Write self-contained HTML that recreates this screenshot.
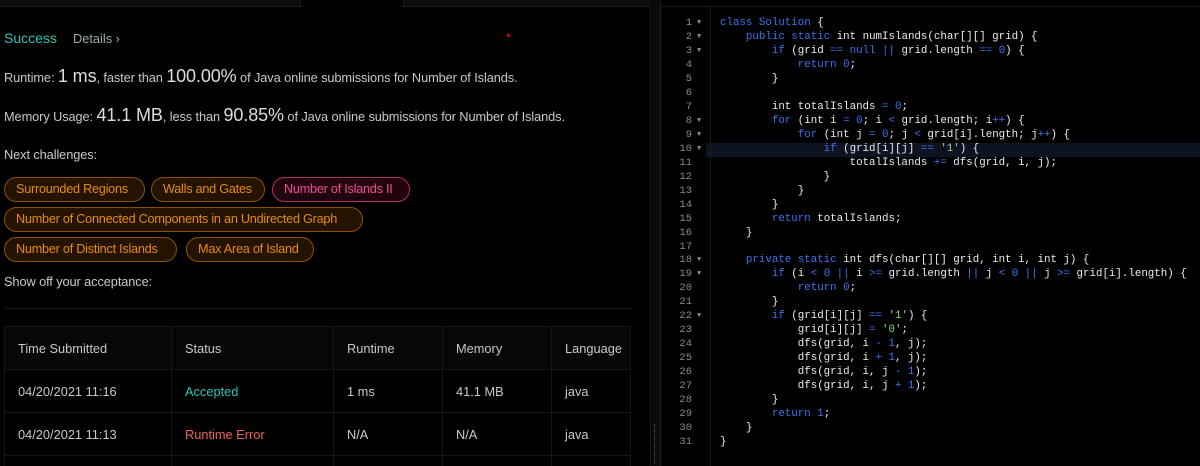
<!DOCTYPE html>
<html><head><meta charset="utf-8"><style>
*{margin:0;padding:0;box-sizing:border-box}
html{width:1200px;height:466px;overflow:hidden;background:#000}
body{width:1200px;height:466px;background:#000;overflow:hidden;position:relative;font-family:"Liberation Sans",sans-serif;color:#c4c4c4}
.abs{position:absolute;white-space:nowrap}
.top1{left:0;top:0;width:301px;height:7px;background:#0b0b0b;border-bottom:1px solid #1c1c1c;border-right:1px solid #1c1c1c}
.top2{left:403px;top:0;width:248px;height:7px;background:#0b0b0b;border-bottom:1px solid #1c1c1c;border-left:1px solid #1c1c1c}
.lp{left:0;top:7px;width:651px;height:459px;border-right:1px solid #1c1c1c}
.div{left:652px;top:0;width:8px;height:466px;background:#0a0a0a}
.ed{left:660px;top:0;width:540px;height:466px;border-left:1px solid #202020;background:#000}
.edtop{left:660px;top:0;width:540px;height:7px;border-bottom:1px solid #1c1c1c}
.gut{left:710px;top:7px;width:1px;height:459px;background:#1a1a1a}
.tag{position:absolute;height:25px;border:1px solid #8a5200;background:#231300;color:#e88a0c;border-radius:13px;font-size:12.7px;letter-spacing:-0.25px;line-height:23px;padding:0 0 0 11px;white-space:nowrap;overflow:hidden}
.pink{border-color:#b0306a;background:#22040f;color:#ee4f93}
.t{font-size:12.8px;color:#c8c8c8;letter-spacing:-0.1px}
.big{font-size:18px;color:#ddd}
table{position:absolute;left:4px;top:326px;width:627px;border-collapse:collapse;font-size:12.8px;color:#c8c8c8;table-layout:fixed}
td{border:1px solid #161616;height:43px;padding-left:13px}
tr.h td{background:#070707}
tr.last td{height:10px;border-bottom:none}
.code{left:660px;top:17px;font-family:"Liberation Mono","DejaVu Sans Mono",monospace;font-size:10.8px;line-height:13.97px;color:#ececec}
.ln{position:absolute;left:0;width:32px;text-align:right;color:#8a8a8a;font-size:10.5px}
.ar{position:absolute;left:37px;color:#888;font-size:7px}
.tx{position:absolute;left:60px;white-space:pre}
.k{color:#3c74f0}.s{color:#8fd68f}.o{color:#3c74f0}
.hl{left:706px;top:143px;width:494px;height:14px;background:#0d1320}
</style></head><body>
<div class="abs top1"></div><div class="abs top2"></div>
<div class="abs lp"></div>
<div class="abs div"></div>
<div class="abs ed"></div>
<div class="abs edtop"></div>
<div class="abs hl"></div>
<div class="abs gut"></div>
<div class="abs" style="left:507px;top:34px;width:3px;height:3px;background:#e00;border-radius:50%"></div>
<div class="abs" style="left:4px;top:30px;font-size:14px;color:#2ec4b6">Success</div>
<div class="abs" style="left:73px;top:31px;font-size:12.8px;color:#9aa">Details ›</div>
<div class="abs t" style="left:4px;top:66px">Runtime: <span class="big">1 ms</span>, faster than <span class="big">100.00%</span> of Java online submissions for Number of Islands.</div>
<div class="abs t" style="left:4px;top:105px">Memory Usage: <span class="big">41.1 MB</span>, less than <span class="big">90.85%</span> of Java online submissions for Number of Islands.</div>
<div class="abs t" style="left:4px;top:147px">Next challenges:</div>
<div class="tag" style="left:4px;top:177px;width:141px">Surrounded Regions</div>
<div class="tag" style="left:151px;top:177px;width:114px">Walls and Gates</div>
<div class="tag pink" style="left:272px;top:177px;width:138px">Number of Islands II</div>
<div class="tag" style="left:4px;top:207px;width:359px">Number of Connected Components in an Undirected Graph</div>
<div class="tag" style="left:4px;top:237px;width:173px">Number of Distinct Islands</div>
<div class="tag" style="left:186px;top:237px;width:128px">Max Area of Island</div>
<div class="abs t" style="left:4px;top:274px">Show off your acceptance:</div>
<div class="abs" style="left:4px;top:308px;width:627px;height:1px;background:#161616"></div>
<table>
<tr class="h"><td style="width:167px">Time Submitted</td><td style="width:162px">Status</td><td style="width:109px">Runtime</td><td style="width:109px">Memory</td><td>Language</td></tr>
<tr><td>04/20/2021 11:16</td><td style="color:#2ec4b6">Accepted</td><td>1 ms</td><td>41.1 MB</td><td>java</td></tr>
<tr><td>04/20/2021 11:13</td><td style="color:#f0605a">Runtime Error</td><td>N/A</td><td>N/A</td><td>java</td></tr>
<tr class="last"><td></td><td></td><td></td><td></td><td></td></tr>
</table>
<div class="abs code">
<div style="position:relative">
<span class="ln" style="top:0">1</span><span class="ar" style="top:0">▼</span><span class="tx" style="top:0"><span class="k">class</span> <span class="k">Solution</span> {</span>
<span class="ln" style="top:13.97px">2</span><span class="ar" style="top:13.97px">▼</span><span class="tx" style="top:13.97px">    <span class="k">public</span> <span class="k">static</span> int numIslands(char[][] grid) {</span>
<span class="ln" style="top:27.94px">3</span><span class="ar" style="top:27.94px">▼</span><span class="tx" style="top:27.94px">        <span class="k">if</span> (grid <span class="o">==</span> <span class="k">null</span> <span class="o">||</span> grid.length <span class="o">==</span> <span class="k">0</span>) {</span>
<span class="ln" style="top:41.91px">4</span><span class="tx" style="top:41.91px">            <span class="k">return</span> <span class="k">0</span>;</span>
<span class="ln" style="top:55.88px">5</span><span class="tx" style="top:55.88px">        }</span>
<span class="ln" style="top:69.85px">6</span>
<span class="ln" style="top:83.82px">7</span><span class="tx" style="top:83.82px">        int totalIslands <span class="o">=</span> <span class="k">0</span>;</span>
<span class="ln" style="top:97.79px">8</span><span class="ar" style="top:97.79px">▼</span><span class="tx" style="top:97.79px">        <span class="k">for</span> (int i <span class="o">=</span> <span class="k">0</span>; i <span class="o">&lt;</span> grid.length; i<span class="o">++</span>) {</span>
<span class="ln" style="top:111.76px">9</span><span class="ar" style="top:111.76px">▼</span><span class="tx" style="top:111.76px">            <span class="k">for</span> (int j <span class="o">=</span> <span class="k">0</span>; j <span class="o">&lt;</span> grid[i].length; j<span class="o">++</span>) {</span>
<span class="ln" style="top:125.73px">10</span><span class="ar" style="top:125.73px">▼</span><span class="tx" style="top:125.73px">                <span class="k">if</span> (grid[i][j] <span class="o">==</span> <span class="s">'1'</span>) {</span>
<span class="ln" style="top:139.7px">11</span><span class="tx" style="top:139.7px">                    totalIslands <span class="o">+=</span> dfs(grid, i, j);</span>
<span class="ln" style="top:153.67px">12</span><span class="tx" style="top:153.67px">                }</span>
<span class="ln" style="top:167.64px">13</span><span class="tx" style="top:167.64px">            }</span>
<span class="ln" style="top:181.61px">14</span><span class="tx" style="top:181.61px">        }</span>
<span class="ln" style="top:195.58px">15</span><span class="tx" style="top:195.58px">        <span class="k">return</span> totalIslands;</span>
<span class="ln" style="top:209.55px">16</span><span class="tx" style="top:209.55px">    }</span>
<span class="ln" style="top:223.52px">17</span>
<span class="ln" style="top:237.49px">18</span><span class="ar" style="top:237.49px">▼</span><span class="tx" style="top:237.49px">    <span class="k">private</span> <span class="k">static</span> int dfs(char[][] grid, int i, int j) {</span>
<span class="ln" style="top:251.46px">19</span><span class="ar" style="top:251.46px">▼</span><span class="tx" style="top:251.46px">        <span class="k">if</span> (i <span class="o">&lt;</span> <span class="k">0</span> <span class="o">||</span> i <span class="o">&gt;=</span> grid.length <span class="o">||</span> j <span class="o">&lt;</span> <span class="k">0</span> <span class="o">||</span> j <span class="o">&gt;=</span> grid[i].length) {</span>
<span class="ln" style="top:265.43px">20</span><span class="tx" style="top:265.43px">            <span class="k">return</span> <span class="k">0</span>;</span>
<span class="ln" style="top:279.4px">21</span><span class="tx" style="top:279.4px">        }</span>
<span class="ln" style="top:293.37px">22</span><span class="ar" style="top:293.37px">▼</span><span class="tx" style="top:293.37px">        <span class="k">if</span> (grid[i][j] <span class="o">==</span> <span class="s">'1'</span>) {</span>
<span class="ln" style="top:307.34px">23</span><span class="tx" style="top:307.34px">            grid[i][j] <span class="o">=</span> <span class="s">'0'</span>;</span>
<span class="ln" style="top:321.31px">24</span><span class="tx" style="top:321.31px">            dfs(grid, i <span class="o">-</span> <span class="k">1</span>, j);</span>
<span class="ln" style="top:335.28px">25</span><span class="tx" style="top:335.28px">            dfs(grid, i <span class="o">+</span> <span class="k">1</span>, j);</span>
<span class="ln" style="top:349.25px">26</span><span class="tx" style="top:349.25px">            dfs(grid, i, j <span class="o">-</span> <span class="k">1</span>);</span>
<span class="ln" style="top:363.22px">27</span><span class="tx" style="top:363.22px">            dfs(grid, i, j <span class="o">+</span> <span class="k">1</span>);</span>
<span class="ln" style="top:377.19px">28</span><span class="tx" style="top:377.19px">        }</span>
<span class="ln" style="top:391.16px">29</span><span class="tx" style="top:391.16px">        <span class="k">return</span> <span class="k">1</span>;</span>
<span class="ln" style="top:405.13px">30</span><span class="tx" style="top:405.13px">    }</span>
<span class="ln" style="top:419.1px">31</span><span class="tx" style="top:419.1px">}</span>
</div></div>
<div class="abs" style="left:654px;top:424px;width:1px;height:40px;border-left:1px dotted #555"></div>
</body></html>
